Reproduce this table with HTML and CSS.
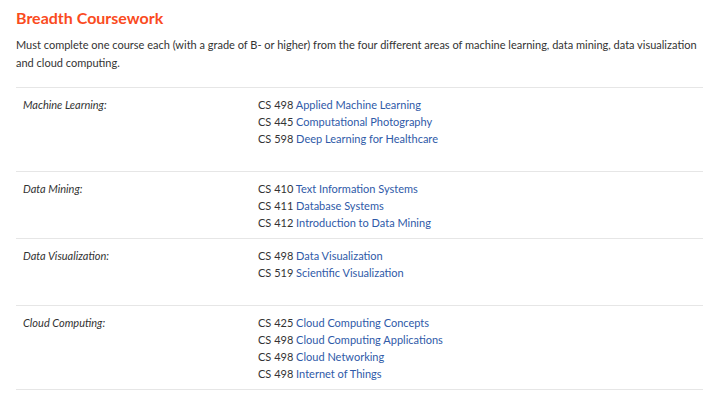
FILE: index.html
```html
<!DOCTYPE html>
<html>
<head>
<meta charset="utf-8">
<link rel="stylesheet" href="styles.css">
</head>
<body>
<div class="page">
  <h2 class="title">Breadth Coursework</h2>
  <p class="intro">Must complete one course each (with a grade of B- or higher) from the four different areas of machine learning, data mining, data visualization and cloud computing.</p>
  <table class="areas">
    <tr>
      <td class="label"><em>Machine Learning:</em></td>
      <td class="courses">
        <div>CS 498 <a href="#">Applied Machine Learning</a></div>
        <div>CS 445 <a href="#">Computational Photography</a></div>
        <div>CS 598 <a href="#">Deep Learning for Healthcare</a></div>
        <div class="blank">&nbsp;</div>
      </td>
    </tr>
    <tr>
      <td class="label"><em>Data Mining:</em></td>
      <td class="courses">
        <div>CS 410 <a href="#">Text Information Systems</a></div>
        <div>CS 411 <a href="#">Database Systems</a></div>
        <div>CS 412 <a href="#">Introduction to Data Mining</a></div>
      </td>
    </tr>
    <tr>
      <td class="label"><em>Data Visualization:</em></td>
      <td class="courses">
        <div>CS 498 <a href="#">Data Visualization</a></div>
        <div>CS 519 <a href="#">Scientific Visualization</a></div>
        <div class="blank">&nbsp;</div>
      </td>
    </tr>
    <tr>
      <td class="label"><em>Cloud Computing:</em></td>
      <td class="courses">
        <div>CS 425 <a href="#">Cloud Computing Concepts</a></div>
        <div>CS 498 <a href="#">Cloud Computing Applications</a></div>
        <div>CS 498 <a href="#">Cloud Networking</a></div>
        <div>CS 498 <a href="#">Internet of Things</a></div>
      </td>
    </tr>
  </table>
</div>
</body>
</html>
```

FILE: styles.css
```css
html, body {
  margin: 0;
  padding: 0;
  background: #ffffff;
}
.page {
  padding: 7px 17px 0 16px;
  font-family: Lato, "Noto Sans", sans-serif;
  color: #333333;
  font-size: 11px;
}
.title {
  margin: 0;
  font-size: 16px;
  line-height: 22px;
  font-weight: 700;
  color: #fa4b1e;
}
.intro {
  margin: 7px 0 15px 0;
  font-size: 11px;
  line-height: 18px;
}
.areas {
  width: 100%;
  border-collapse: collapse;
  border-top: 1px solid #e6e6e6;
}
.areas tr {
  border-bottom: 1px solid #e6e6e6;
}
.areas td {
  vertical-align: top;
  padding: 8px 7px 7px 7px;
  line-height: 17px;
}
.label {
  width: 221px;
  color: #333333;
}
.courses a {
  color: #2f5aa8;
  text-decoration: none;
}
```
